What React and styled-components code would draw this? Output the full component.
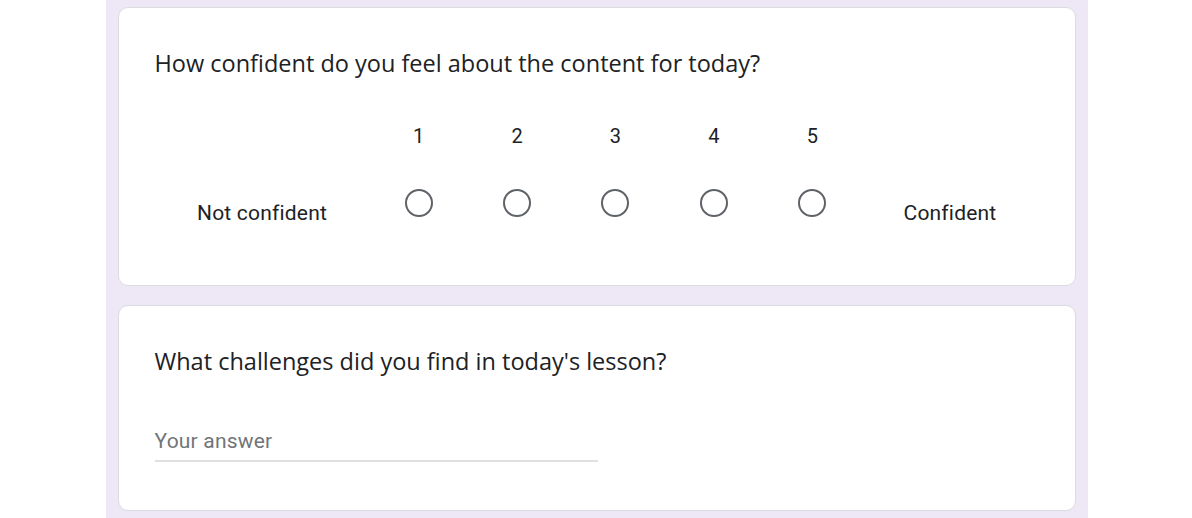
import styled, { createGlobalStyle } from "styled-components";

const GlobalStyle = createGlobalStyle`
  html, body {
    margin: 0;
    padding: 0;
    background: #fff;
  }
  body {
    font-family: Roboto, "Liberation Sans", sans-serif;
    color: #202124;
  }
`;

const Page = styled.div`
  width: 1192px;
  height: 518px;
  overflow: hidden;
  display: flex;
  justify-content: center;
`;

const Column = styled.div`
  width: 982px;
  margin-left: 1px;
  background: #ede7f6;
  padding: 7px 12px 0 12px;
  box-sizing: border-box;
  display: flex;
  flex-direction: column;
  gap: 19px;
`;

const Card = styled.div`
  background: #fff;
  border: 1px solid #dadce0;
  border-radius: 10px;
  padding: ${({ pad }) => pad};
  height: ${({ h }) => h}px;
  box-sizing: border-box;
`;

const Question = styled.div`
  font-family: "Open Sans", "Liberation Sans", sans-serif;
  font-size: 23.5px;
  line-height: 32px;
  color: #202124;
`;

const Scale = styled.div`
  display: grid;
  grid-template-columns: 215px repeat(5, 98.4px) 1fr;
  grid-template-rows: 32px 40px;
  row-gap: 31px;
  margin-top: 41px;
  align-items: center;
  justify-items: center;
`;

const Num = styled.div`
  font-size: 20px;
  line-height: 24px;
  color: #202124;
`;

const EndLabel = styled.div`
  font-size: 21px;
  letter-spacing: 0.2px;
  line-height: 24px;
  color: #202124;
  padding-top: 20px;
`;

const Radio = styled.div`
  width: 24px;
  height: 24px;
  border: 2.6px solid #5f6368;
  border-radius: 50%;
`;

const Answer = styled.div`
  margin-top: 52px;
  width: 443px;
  font-size: 21px;
  letter-spacing: 0.2px;
  line-height: 25px;
  color: #70757a;
  padding-bottom: 6px;
  border-bottom: 2px solid #e0e0e0;
`;

export default function App() {
  const nums = [1, 2, 3, 4, 5];
  return (
    <>
      <GlobalStyle />
      <Page>
        <Column>
          <Card h={279} pad="39px 36px 0 36px">
            <Question>How confident do you feel about the content for today?</Question>
            <Scale>
              <span />
              {nums.map((n) => (
                <Num key={n}>{n}</Num>
              ))}
              <span />
              <EndLabel>Not confident</EndLabel>
              {nums.map((n) => (
                <Radio key={n} />
              ))}
              <EndLabel>Confident</EndLabel>
            </Scale>
          </Card>
          <Card h={206} pad="39px 36px 0 36px">
            <Question>What challenges did you find in today's lesson?</Question>
            <Answer>Your answer</Answer>
          </Card>
        </Column>
      </Page>
    </>
  );
}
